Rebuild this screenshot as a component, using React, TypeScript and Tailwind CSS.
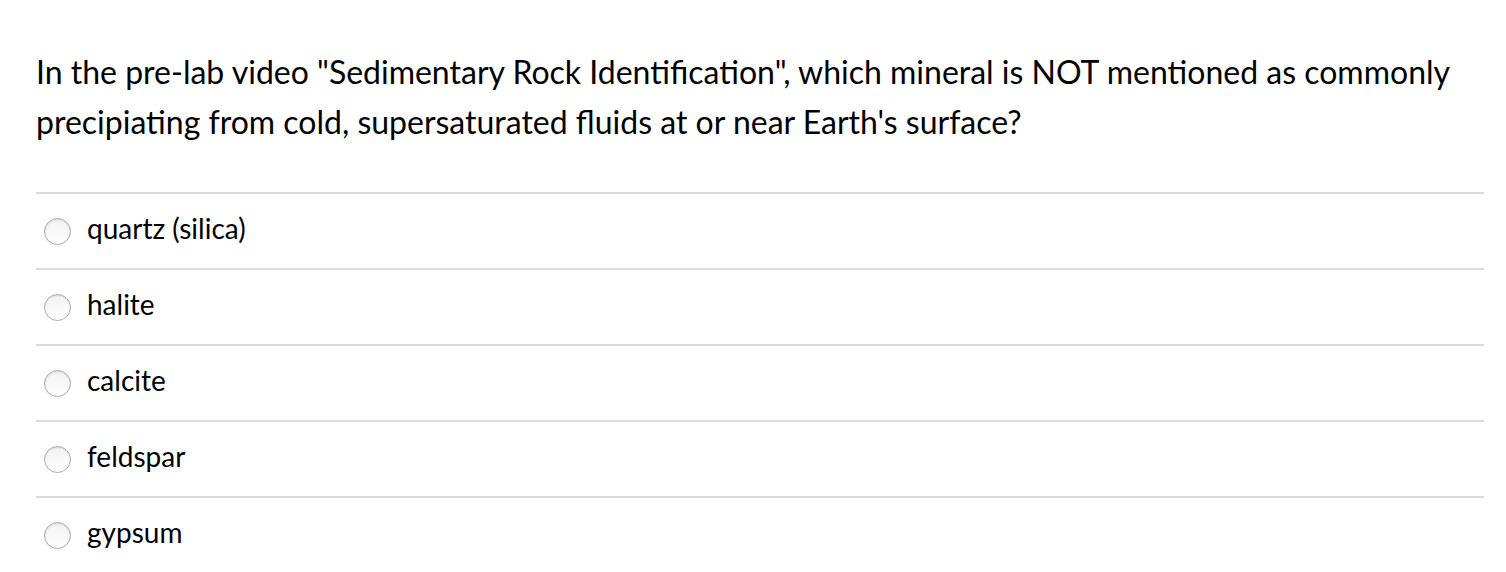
const options = ["quartz (silica)", "halite", "calcite", "feldspar", "gypsum"];

function Radio() {
  return (
    <span className="w-[27px] h-[27px] shrink-0 rounded-full border border-[#a9a9a9] bg-gradient-to-b from-[#f2f2f2] to-white shadow-[inset_0_1px_2px_rgba(0,0,0,0.1)]" />
  );
}

export default function App() {
  return (
    <div className="bg-white min-h-[572px] w-[1506px] text-black" style={{ fontFamily: "Lato, 'Open Sans', sans-serif" }}>
      <div className="px-[36px] pt-[47px]">
        <p className="text-[32px] leading-[50px]">
          In the pre-lab video "Sedimentary Rock Identification", which mineral is NOT mentioned as commonly precipiating from cold, supersaturated fluids at or near Earth's surface?
        </p>
        <div className="mt-[45px] w-[1448px]">
          {options.map((o) => (
            <div key={o} className="border-t-2 border-[#dadada] h-[76px] flex items-center gap-[16px] pl-[8px]">
              <Radio />
              <span className="text-[28px] leading-none pb-[7px]">{o}</span>
            </div>
          ))}
        </div>
      </div>
    </div>
  );
}
